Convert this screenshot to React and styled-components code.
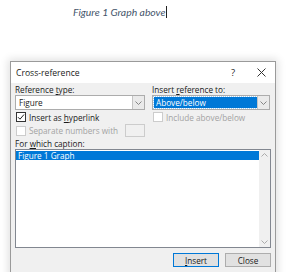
import styled, { createGlobalStyle } from 'styled-components'

const Global = createGlobalStyle`
	html, body {
		margin: 0;
		padding: 0;
		background: #ffffff;
	}
	body {
		width: 300px;
		height: 272px;
		overflow: hidden;
		font-family: 'Open Sans', 'Noto Sans', sans-serif;
	}
`

const Page = styled.div`
	padding-top: 5px;
`

const Caption = styled.p`
	margin: 0 0 0 73px;
	height: 14px;
	font-family: 'Lato', 'Open Sans', sans-serif;
	font-style: italic;
	font-size: 10.4px;
	line-height: 14px;
	color: #44546a;
`

const Cursor = styled.span`
	display: inline-block;
	width: 1px;
	height: 12px;
	margin-left: 1px;
	vertical-align: -2px;
	background: #222;
`

const Dialog = styled.div`
	margin: 42px 0 0 10px;
	width: 264px;
	height: 220px;
	border: 1px solid #9a9a9a;
	border-bottom: none;
	background: #f0f0f0;
	box-shadow: 0 0 8px 2px rgba(0, 0, 0, 0.12);
	font-size: 8.2px;
	color: #1a1a1a;
`

const TitleBar = styled.div`
	display: flex;
	align-items: center;
	height: 21px;
	padding-left: 5px;
	background: #ffffff;
`

const Title = styled.span`
	flex: 1;
	font-size: 8.6px;
`

const TitleButton = styled.span`
	display: flex;
	align-items: center;
	justify-content: center;
	width: 28px;
	height: 21px;
	font-size: 9.5px;
	color: #222;
`

const Body = styled.div`
	padding: 2px 4px 0;
`

const Columns = styled.div`
	display: grid;
	grid-template-columns: 130px 118px;
	column-gap: 7px;
`

const Column = styled.div`
	display: flex;
	flex-direction: column;
`

const Label = styled.div`
	height: 9px;
	line-height: 9px;
	margin-bottom: 1px;
	margin-top: ${p => p.$top || 0}px;
	white-space: nowrap;
`

const Select = styled.div`
	display: flex;
	height: 15px;
	border: 1px solid #acacac;
	background: #ffffff;
	box-sizing: border-box;
`

const SelectValue = styled.div`
	flex: 1;
	display: flex;
	align-items: center;
	padding-left: 2px;
	margin: 1px 0 1px 1px;
	background: ${p => (p.$selected ? '#0078d7' : 'transparent')};
	color: ${p => (p.$selected ? '#ffffff' : '#1a1a1a')};
	outline: ${p => (p.$selected ? '1px dotted #a8cff0' : 'none')};
`

const SelectArrow = styled.div`
	display: flex;
	align-items: center;
	justify-content: center;
	width: 11px;
	border-left: 1px solid #c4c4c4;
	background: #eaeaea;
`

const CheckRow = styled.label`
	display: flex;
	align-items: center;
	gap: 3px;
	height: ${p => p.$h || 13}px;
	padding-left: 1px;
	color: ${p => (p.$disabled ? '#a3a3a3' : '#1a1a1a')};
	white-space: nowrap;
`

const Box = styled.span`
	display: flex;
	align-items: center;
	justify-content: center;
	width: 8px;
	height: 8px;
	border: 1px solid ${p => (p.$disabled ? '#cccccc' : '#333333')};
	background: #ffffff;
`

const SmallInput = styled.span`
	width: 18px;
	height: 11px;
	margin-left: 4px;
	border: 1px solid #cccccc;
	background: #f0f0f0;
`

const List = styled.div`
	display: flex;
	height: 99px;
	border: 1px solid #828790;
	background: #ffffff;
	box-sizing: border-box;
`

const Items = styled.div`
	flex: 1;
	padding-top: 1px;
`

const Item = styled.div`
	height: 9px;
	line-height: 9px;
	padding-left: 2px;
	background: #0078d7;
	color: #ffffff;
`

const Scrollbar = styled.div`
	display: flex;
	flex-direction: column;
	justify-content: space-between;
	align-items: center;
	width: 11px;
	padding: 3px 0;
	background: #f0f0f0;
`

const Buttons = styled.div`
	display: flex;
	justify-content: flex-end;
	gap: 6px;
	margin-top: 5px;
`

const Button = styled.div`
	display: flex;
	align-items: center;
	justify-content: center;
	width: 46px;
	height: 14px;
	box-sizing: border-box;
	border: 1px solid ${p => (p.$primary ? '#0078d7' : '#adadad')};
	background: #e1e1e1;
	font-size: 8.2px;
`

const Chevron = ({ up, color = '#7a7a7a' }) => (
	<svg width="7" height="4" viewBox="0 0 7 4">
		<path d={up ? 'M0.5 3.5 L3.5 0.5 L6.5 3.5' : 'M0.5 0.5 L3.5 3.5 L6.5 0.5'} fill="none" stroke={color} strokeWidth="0.9" />
	</svg>
)

const Tick = () => (
	<svg width="8" height="8" viewBox="0 0 8 8">
		<path d="M1 4.2 L3 6.2 L7 1.5" fill="none" stroke="#222" strokeWidth="1" />
	</svg>
)

const App = () => {
	return (
		<Page>
			<Global />
			<Caption>
				Figure 1 Graph above
				<Cursor />
			</Caption>
			<Dialog>
				<TitleBar>
					<Title>Cross-reference</Title>
					<TitleButton>?</TitleButton>
					<TitleButton>
						<svg width="9" height="9" viewBox="0 0 9 9">
							<path d="M0.5 0.5 L8.5 8.5 M8.5 0.5 L0.5 8.5" stroke="#333" strokeWidth="1" />
						</svg>
					</TitleButton>
				</TitleBar>
				<Body>
					<Columns>
						<Column>
							<Label>
								Reference <u>t</u>ype:
							</Label>
							<Select>
								<SelectValue>Figure</SelectValue>
								<SelectArrow>
									<Chevron />
								</SelectArrow>
							</Select>
							<CheckRow $h={14}>
								<Box>
									<Tick />
								</Box>
								<span>
									Insert as <u>h</u>yperlink
								</span>
							</CheckRow>
							<CheckRow $disabled>
								<Box $disabled />
								<span>Separate numbers with</span>
								<SmallInput />
							</CheckRow>
						</Column>
						<Column>
							<Label>
								Insert <u>r</u>eference to:
							</Label>
							<Select>
								<SelectValue $selected>Above/below</SelectValue>
								<SelectArrow>
									<Chevron />
								</SelectArrow>
							</Select>
							<CheckRow $h={14} $disabled>
								<Box $disabled />
								<span>Include above/below</span>
							</CheckRow>
						</Column>
					</Columns>
					<Label $top={2}>
						For <u>w</u>hich caption:
					</Label>
					<List>
						<Items>
							<Item>Figure 1 Graph</Item>
						</Items>
						<Scrollbar>
							<Chevron up color="#a3a3a3" />
							<Chevron color="#a3a3a3" />
						</Scrollbar>
					</List>
					<Buttons>
						<Button $primary>
							<span>
								<u>I</u>nsert
							</span>
						</Button>
						<Button>Close</Button>
					</Buttons>
				</Body>
			</Dialog>
		</Page>
	)
}

export default App
